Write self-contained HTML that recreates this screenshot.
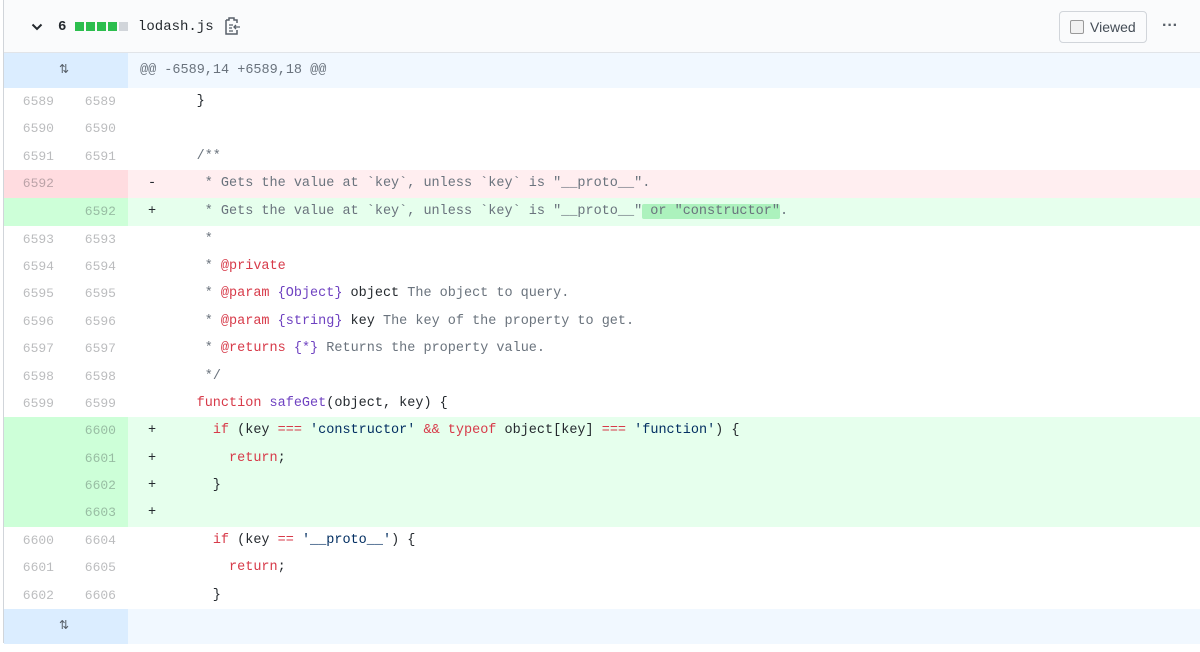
<!DOCTYPE html><html><head><style>
body{margin:0;background:#fff;width:1200px;height:652px;overflow:hidden;font-family:"Liberation Mono",monospace;}
.box{position:absolute;left:3px;top:0;width:1200px;height:643px;border:1px solid #d1d5da;border-right:none;border-top:none;box-sizing:border-box;}
.hdr{height:53px;background:#fafbfc;border-bottom:1px solid #e1e4e8;box-sizing:border-box;position:relative;font-size:14px;color:#24292e}
.row{position:relative;height:27.4px;font-size:13.5px;line-height:27.4px;white-space:pre;color:#24292e}
.n1,.n2{position:absolute;top:0;height:100%;width:62px;text-align:right;color:rgba(27,31,35,.3);font-size:13px}
.n1{left:0;width:50px}.n2{left:62px;width:50px}
.nb{position:absolute;left:0;top:0;width:124px;height:100%}
.code{position:absolute;left:144px;top:0}
.hunk .code{left:136px}
.del{background:#ffeef0}.del .nb{background:#ffdce0}
.add{background:#e6ffed}.add .nb{background:#cdffd8}
.hunk{background:#f1f8ff;height:35px;line-height:35px;color:#6a737d}.hunk .nb{background:#dbedff}
.k{color:#d73a49}.s{color:#032f62}.c{color:#6a737d}.p{color:#6f42c1}.e{color:#005cc5}
.hl{background:#acf2bd;border-radius:2px}
</style></head><body><div class="box">
<div class="hdr">
<svg style="position:absolute;left:27px;top:22px" width="12" height="10" viewBox="0 0 12 10"><path d="M1.5 2.5l4.5 4.5 4.5-4.5" fill="none" stroke="#24292e" stroke-width="2"/></svg>
<span style="position:absolute;left:54px;top:19px;font-weight:bold;font-size:14px">6</span>
<span style="position:absolute;left:71px;top:22px;display:flex;gap:2px"><i style="width:9px;height:9px;background:#2cbe4e"></i><i style="width:9px;height:9px;background:#2cbe4e"></i><i style="width:9px;height:9px;background:#2cbe4e"></i><i style="width:9px;height:9px;background:#2cbe4e"></i><i style="width:9px;height:9px;background:#d1d5da"></i></span>
<span style="position:absolute;left:134px;top:19px">lodash.js</span>
<svg style="position:absolute;left:219px;top:16px" width="18" height="20" viewBox="0 0 18 20"><path d="M3 4h3v-2h5v2h3v3M14 14v4H3V4" fill="none" stroke="#586069" stroke-width="1.5"/><path d="M6 9h4M6 12h3M6 15h4M17 11h-6M13 9l-2 2 2 2" fill="none" stroke="#586069" stroke-width="1.3"/></svg>
<div style="position:absolute;left:1055px;top:11px;width:88px;height:32px;border:1px solid #d1d5da;border-radius:4px;box-sizing:border-box;background:#fafbfc;font-family:'Liberation Sans',sans-serif;font-size:14px;color:#444d56">
<span style="position:absolute;left:10px;top:8px;width:12px;height:12px;border:1px solid #999;border-radius:2px;background:#f1f1f1"></span><span style="position:absolute;left:30px;top:7px">Viewed</span></div>
<span style="position:absolute;left:1158px;top:17px;font-family:'Liberation Sans',sans-serif;font-weight:bold;font-size:16px;color:#586069">···</span>
</div>
<div class="row hunk"><div class="nb"><span style="position:absolute;left:55px;font-size:12px;color:#586069">⇅</span></div><span class="code">@@ -6589,14 +6589,18 @@</span></div>
<div class="row"><div class="nb"></div><span class="n1">6589</span><span class="n2">6589</span><span class="code">      }</span></div>
<div class="row"><div class="nb"></div><span class="n1">6590</span><span class="n2">6590</span><span class="code"> </span></div>
<div class="row"><div class="nb"></div><span class="n1">6591</span><span class="n2">6591</span><span class="code">      <span class="c">/**</span></span></div>
<div class="row del"><div class="nb"></div><span class="n1">6592</span><span class="code">-      <span class="c">* Gets the value at `key`, unless `key` is "__proto__".</span></span></div>
<div class="row add" style="height:28px"><div class="nb"></div><span class="n2">6592</span><span class="code">+      <span class="c">* Gets the value at `key`, unless `key` is "__proto__"<span class="hl"> or "constructor"</span>.</span></span></div>
<div class="row"><div class="nb"></div><span class="n1">6593</span><span class="n2">6593</span><span class="code">       <span class="c">*</span></span></div>
<div class="row"><div class="nb"></div><span class="n1">6594</span><span class="n2">6594</span><span class="code">       <span class="c">* </span><span class="k">@private</span></span></div>
<div class="row"><div class="nb"></div><span class="n1">6595</span><span class="n2">6595</span><span class="code">       <span class="c">* </span><span class="k">@param</span> <span class="p">{Object}</span> object <span class="c">The object to query.</span></span></div>
<div class="row"><div class="nb"></div><span class="n1">6596</span><span class="n2">6596</span><span class="code">       <span class="c">* </span><span class="k">@param</span> <span class="p">{string}</span> key <span class="c">The key of the property to get.</span></span></div>
<div class="row"><div class="nb"></div><span class="n1">6597</span><span class="n2">6597</span><span class="code">       <span class="c">* </span><span class="k">@returns</span> <span class="p">{*}</span> <span class="c">Returns the property value.</span></span></div>
<div class="row"><div class="nb"></div><span class="n1">6598</span><span class="n2">6598</span><span class="code">       <span class="c">*/</span></span></div>
<div class="row"><div class="nb"></div><span class="n1">6599</span><span class="n2">6599</span><span class="code">      <span class="k">function</span> <span class="p">safeGet</span>(object, key) {</span></div>
<div class="row add"><div class="nb"></div><span class="n2">6600</span><span class="code">+       <span class="k">if</span> (key <span class="k">===</span> <span class="s">'constructor'</span> <span class="k">&amp;&amp;</span> <span class="k">typeof</span> object[key] <span class="k">===</span> <span class="s">'function'</span>) {</span></div>
<div class="row add"><div class="nb"></div><span class="n2">6601</span><span class="code">+         <span class="k">return</span>;</span></div>
<div class="row add"><div class="nb"></div><span class="n2">6602</span><span class="code">+       }</span></div>
<div class="row add"><div class="nb"></div><span class="n2">6603</span><span class="code">+</span></div>
<div class="row"><div class="nb"></div><span class="n1">6600</span><span class="n2">6604</span><span class="code">        <span class="k">if</span> (key <span class="k">==</span> <span class="s">'__proto__'</span>) {</span></div>
<div class="row"><div class="nb"></div><span class="n1">6601</span><span class="n2">6605</span><span class="code">          <span class="k">return</span>;</span></div>
<div class="row"><div class="nb"></div><span class="n1">6602</span><span class="n2">6606</span><span class="code">        }</span></div>
<div class="row hunk"><div class="nb"><span style="position:absolute;left:55px;font-size:12px;color:#586069">⇅</span></div></div>
</div></body></html>
